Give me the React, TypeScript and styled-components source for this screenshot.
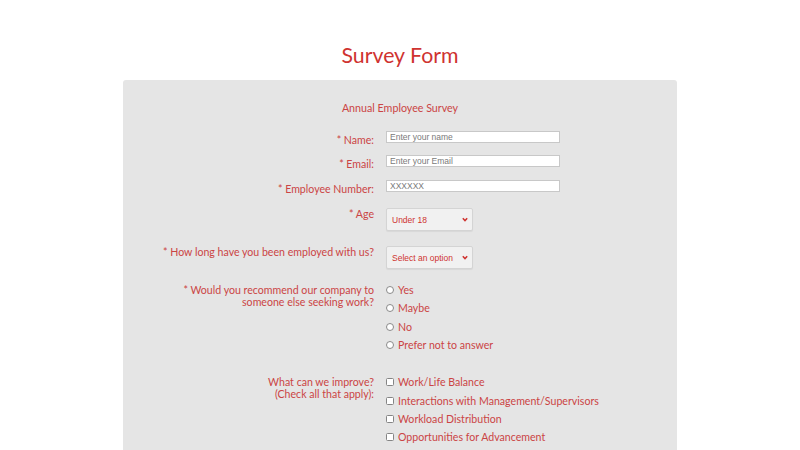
import React from "react";
import styled, { createGlobalStyle } from "styled-components";

const Global = createGlobalStyle`
  html, body { margin: 0; padding: 0; background: #ffffff; }
  body { font-family: "Lato", "Open Sans", sans-serif; }
`;

const RED = "#cf3330";
const LABEL = "#cb4444";

const Page = styled.div`
  width: 800px;
  height: 450px;
  overflow: hidden;
  padding-top: 40px;
  box-sizing: border-box;
`;

const Title = styled.h1`
  margin: 0;
  text-align: center;
  font-family: "Lato", sans-serif;
  font-weight: 400;
  font-size: 21.3px;
  line-height: 30px;
  color: ${RED};
`;

const Panel = styled.form`
  width: 554px;
  margin: 10px auto 0;
  background: #e5e5e5;
  border-radius: 3px;
  padding: 20px 0 40px;
  box-sizing: border-box;
`;

const Subtitle = styled.p`
  margin: 0 0 15px;
  text-align: center;
  font-size: 10.7px;
  line-height: 16px;
  color: ${LABEL};
`;

const Row = styled.div<{ $gap: number }>`
  display: grid;
  grid-template-columns: 251px 1fr;
  column-gap: 12px;
  align-items: start;
  margin-bottom: ${(p) => p.$gap}px;
`;

const Label = styled.label<{ $top?: number }>`
  text-align: right;
  font-size: 10.6px;
  line-height: 12px;
  color: ${LABEL};
  padding-top: ${(p) => p.$top ?? 0}px;
`;

const TextInput = styled.input`
  width: 174px;
  height: 12px;
  box-sizing: border-box;
  border: 1px solid #c8c8c8;
  background: #ffffff;
  padding: 0 3px;
  font-family: "Liberation Sans", Arial, sans-serif;
  font-size: 8.5px;
  color: #555;
  outline: none;
  &::placeholder { color: #7a7a7a; }
`;

const SelectWrap = styled.div`
  position: relative;
  width: 87px;
  height: 23px;
`;

const Select = styled.select`
  appearance: none;
  display: block;
  width: 87px;
  height: 23px;
  box-sizing: border-box;
  border: 1px solid #d4d4d4;
  border-radius: 2px;
  background: #f1f1f1;
  box-shadow: 0 1px 1px rgba(0,0,0,0.06);
  padding: 0 0 0 5px;
  font-family: "Liberation Sans", Arial, sans-serif;
  font-size: 8.5px;
  color: ${RED};
  outline: none;
`;

const Chevron = styled.svg`
  position: absolute;
  right: 5px;
  top: 9px;
  width: 6px;
  height: 5px;
  pointer-events: none;
`;

const Options = styled.div`
  display: flex;
  flex-direction: column;
`;

const Option = styled.label`
  display: flex;
  align-items: center;
  height: 18.3px;
  gap: 4px;
  font-size: 10.6px;
  color: ${LABEL};
`;

const Radio = styled.input`
  appearance: none;
  margin: 0;
  width: 8px;
  height: 8px;
  border: 1px solid #8a8a8a;
  border-radius: 50%;
  background: #fff;
  box-sizing: border-box;
`;

const Check = styled.input`
  appearance: none;
  margin: 0;
  width: 8px;
  height: 8px;
  border: 1px solid #858585;
  border-radius: 1.5px;
  background: #fff;
  box-sizing: border-box;
`;

const Dropdown = ({ value, options }: { value: string; options: string[] }) => (
  <SelectWrap>
    <Select defaultValue={value}>
      {options.map((o) => (
        <option key={o}>{o}</option>
      ))}
    </Select>
    <Chevron viewBox="0 0 6 5">
      <path d="M0.8 1.2 L3 3.6 L5.2 1.2" fill="none" stroke={RED} strokeWidth="1.5" />
    </Chevron>
  </SelectWrap>
);

export default function App() {
  return (
    <Page>
      <Global />
      <Title>Survey Form</Title>
      <Panel onSubmit={(e) => e.preventDefault()}>
        <Subtitle>Annual Employee Survey</Subtitle>
        <Row $gap={9}>
          <Label $top={3}>* Name:</Label>
          <TextInput placeholder="Enter your name" />
        </Row>
        <Row $gap={10}>
          <Label $top={3}>* Email:</Label>
          <TextInput placeholder="Enter your Email" />
        </Row>
        <Row $gap={13}>
          <Label $top={3}>* Employee Number:</Label>
          <TextInput placeholder="XXXXXX" />
        </Row>
        <Row $gap={15}>
          <Label $top={0}>* Age</Label>
          <Dropdown value="Under 18" options={["Under 18", "18-25", "26-35", "36-50", "Over 50"]} />
        </Row>
        <Row $gap={12}>
          <Label $top={0}>* How long have you been employed with us?</Label>
          <Dropdown value="Select an option" options={["Select an option", "Less than 1 year", "1-5 years", "Over 5 years"]} />
        </Row>
        <Row $gap={19}>
          <Label $top={3}>
            * Would you recommend our company to
            <br />
            someone else seeking work?
          </Label>
          <Options>
            {["Yes", "Maybe", "No", "Prefer not to answer"].map((o) => (
              <Option key={o}>
                <Radio type="radio" name="recommend" />
                {o}
              </Option>
            ))}
          </Options>
        </Row>
        <Row $gap={0}>
          <Label $top={3}>
            What can we improve?
            <br />
            (Check all that apply):
          </Label>
          <Options>
            {[
              "Work/Life Balance",
              "Interactions with Management/Supervisors",
              "Workload Distribution",
              "Opportunities for Advancement",
            ].map((o) => (
              <Option key={o}>
                <Check type="checkbox" />
                {o}
              </Option>
            ))}
          </Options>
        </Row>
      </Panel>
    </Page>
  );
}
